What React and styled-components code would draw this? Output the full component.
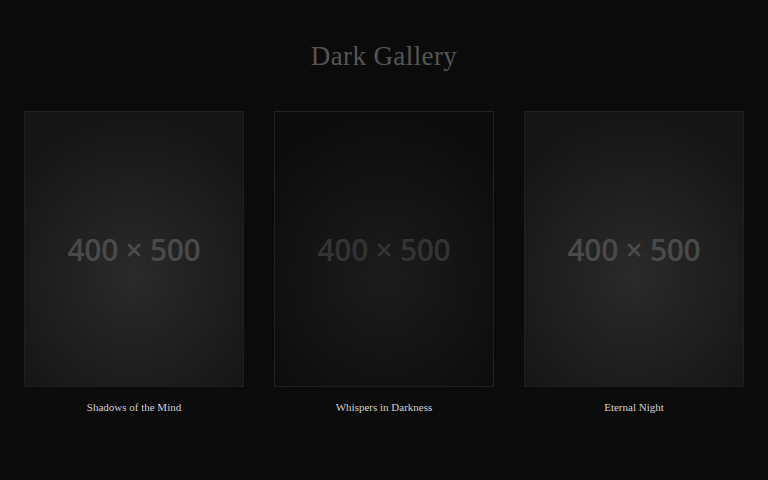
import React from "react"
import styled, { createGlobalStyle } from "styled-components"

const works = [
  { key: "a", title: "Shadows of the Mind", dim: false },
  { key: "b", title: "Whispers in Darkness", dim: true },
  { key: "c", title: "Eternal Night", dim: false },
]

const GlobalStyle = createGlobalStyle`
  html, body {
    margin: 0;
    padding: 0;
    background: #0b0b0b;
  }
  body {
    font-family: "Liberation Serif", "DejaVu Serif", serif;
  }
`

const Page = styled.div`
  width: 768px;
  height: 480px;
  box-sizing: border-box;
  padding: 38px 24px 0;
  background: #0b0b0b;
`

const Title = styled.h1`
  margin: 0 0 37px;
  text-align: center;
  font-family: "Liberation Serif", serif;
  font-weight: 400;
  font-size: 27px;
  line-height: 36px;
  letter-spacing: 0.4px;
  color: #555;
`

const Grid = styled.div`
  display: grid;
  grid-template-columns: repeat(3, 220px);
  justify-content: space-between;
`

const Card = styled.figure`
  margin: 0;
  display: flex;
  flex-direction: column;
  align-items: center;
`

const Frame = styled.div`
  width: 220px;
  height: 276px;
  box-sizing: border-box;
  border: 1px solid #1f1f1f;
  display: flex;
  align-items: center;
  justify-content: center;
  background: radial-gradient(
    ellipse 70% 60% at 50% 60%,
    ${(p) => (p.$dim ? "#1c1c1c" : "#2a2a2a")} 0%,
    ${(p) => (p.$dim ? "#0c0c0c" : "#151515")} 100%
  );
`

const Placeholder = styled.span`
  font-family: "Open Sans", "Noto Sans", sans-serif;
  font-weight: 600;
  font-size: 30px;
  color: ${(p) => (p.$dim ? "#333" : "#4a4a4a")};
  letter-spacing: -0.3px;
`

const Caption = styled.figcaption`
  margin-top: 14px;
  font-family: "Liberation Serif", serif;
  font-size: 11px;
  color: #cfcfcf;
`

const App = () => {
  return (
    <>
      <GlobalStyle />
      <Page>
        <Title>Dark Gallery</Title>
        <Grid>
          {works.map((w) => (
            <Card key={w.key}>
              <Frame $dim={w.dim}>
                <Placeholder $dim={w.dim}>400 × 500</Placeholder>
              </Frame>
              <Caption>{w.title}</Caption>
            </Card>
          ))}
        </Grid>
      </Page>
    </>
  )
}

export default App
